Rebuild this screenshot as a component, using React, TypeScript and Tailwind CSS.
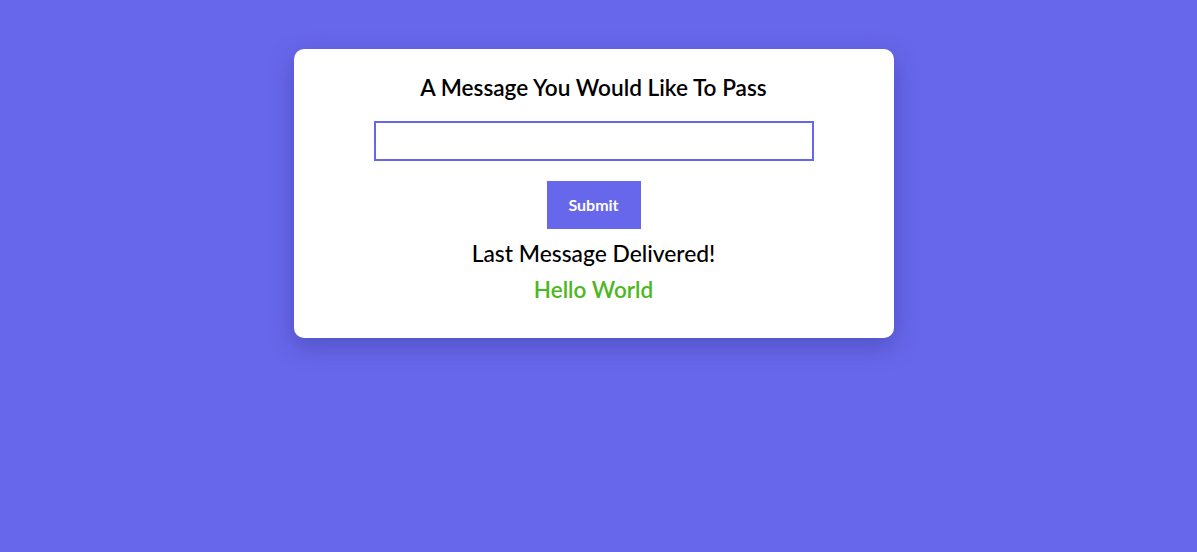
export default function App() {
  return (
    <div
      className="min-h-[552px] w-full bg-[#6767eb] flex justify-center pt-[49px] pr-[10px]"
      style={{ fontFamily: "Lato, 'Noto Sans', sans-serif" }}
    >
      <div className="w-[600px] h-[289px] bg-white rounded-[10px] shadow-[0_8px_24px_rgba(40,40,120,0.35)] flex flex-col items-center pt-[25px]">
        <h1 className="text-[22.6px] leading-[28px] font-semibold text-black">
          A Message You Would Like To Pass
        </h1>
        <input
          type="text"
          className="mt-[19px] w-[440px] h-[40px] border-2 border-[#6767eb] outline-none px-2"
        />
        <button className="mt-[20px] w-[94px] h-[48px] bg-[#6767eb] text-white text-[16px] font-bold">
          Submit
        </button>
        <p className="mt-[10px] text-[22.8px] leading-[28px] font-medium text-black">
          Last Message Delivered!
        </p>
        <p className="mt-[8px] text-[22.5px] leading-[30px] font-semibold text-[#4db71e]">
          Hello World
        </p>
      </div>
    </div>
  );
}
